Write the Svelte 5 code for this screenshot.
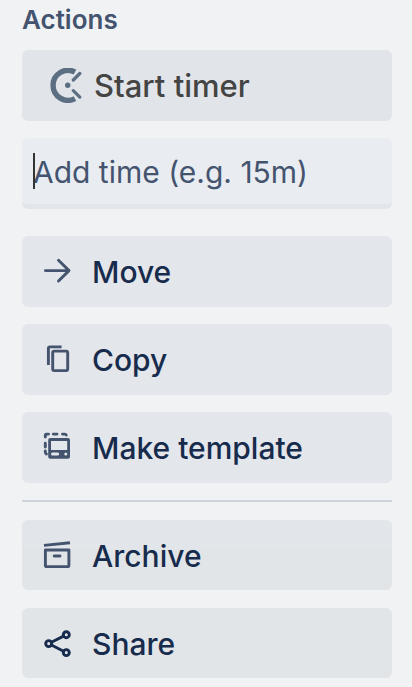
<script>
  const cardActions = [
    { id: 'move', label: 'Move' },
    { id: 'copy', label: 'Copy' },
    { id: 'template', label: 'Make template' },
  ];
  const moreActions = [
    { id: 'archive', label: 'Archive' },
    { id: 'share', label: 'Share' },
  ];
  let time = $state('');
</script>

{#snippet icon(id)}
  <svg class="icon {id}" viewBox="0 0 30 31" aria-hidden="true">
    {#if id === 'move'}
      <path d="M3.4 14.6H27M16.5 4.2L27 14.6L16.5 25" />
    {:else if id === 'copy'}
      <path class="butt" d="M6.4 21V4.4Q6.4 2.9 7.9 2.9H19.6" />
      <rect x="10.7" y="7.1" width="15" height="19.5" rx="1.5" />
    {:else if id === 'template'}
      <path d="M3.3 5V3.4Q3.3 2.1 4.6 2.1H6.5M11.3 2.1H15M20.5 2.1H22.6Q24 2.1 24.2 3M3.3 11.3V15M3.3 19V20.3Q3.3 21.7 4.4 22" />
      <path class="solid" fill-rule="evenodd" d="M8.2 6H26Q28 6 28 8V24.7Q28 26.7 26 26.7H8.2Q6.2 26.7 6.2 24.7V8Q6.2 6 8.2 6ZM9 9V18H25.2V9ZM10.5 20.5A1.5 1.5 0 0 0 10.5 23.5H15.7A1.5 1.5 0 0 0 15.7 20.5ZM23.8 20.5A1.5 1.5 0 0 0 23.8 23.5A1.5 1.5 0 0 0 23.8 20.5Z" />
    {:else if id === 'archive'}
      <path class="butt" d="M2 5.4L28 2.8" />
      <path d="M3.4 10H26.9V25.2Q26.9 26.6 25.5 26.6H4.8Q3.4 26.6 3.4 25.2ZM12.2 16H18" />
    {:else}
      <circle cx="6.7" cy="15.6" r="3" />
      <circle cx="24.3" cy="6.7" r="3" />
      <circle cx="24.3" cy="24.6" r="3" />
      <path d="M9.4 14.2L21.6 8.1M9.4 17L21.6 23.2" />
    {/if}
  </svg>
{/snippet}

<section class="panel" aria-labelledby="actions-title">
  <h2 id="actions-title">Actions</h2>

  <button class="action timer" type="button">
    <svg class="clock" viewBox="0 0 32 35" aria-hidden="true">
      <path class="ring" d="M25 4A15 15 0 1 0 25 30.6" />
      <path class="hands" d="M23.3 12L29.8 5.5M23.3 22.6L29.8 29.1" />
      <circle cx="17.7" cy="17.3" r="2.7" />
    </svg>
    Start timer
  </button>

  <div class="field">
    <input type="text" aria-label="Add time" placeholder="Add time (e.g. 15m)" bind:value={time} />
    {#if !time}<span class="caret"></span>{/if}
  </div>

  <div class="group">
    {#each cardActions as action}
      <button class="action" type="button">{@render icon(action.id)}{action.label}</button>
    {/each}
  </div>

  <hr />

  <div class="group more">
    {#each moreActions as action}
      <button class="action" type="button">{@render icon(action.id)}{action.label}</button>
    {/each}
  </div>
</section>

<style>
  :global(body) {
    margin: 0;
    background: #f1f2f4;
  }
  .panel {
    padding: 4px 20px 9px 22px;
    font-family: Inter, 'Liberation Sans', sans-serif;
    color: #172b4d;
  }
  h2 {
    margin: 0 0 14px;
    font-size: 26px;
    line-height: 32px;
    font-weight: 600;
    color: #44546f;
  }
  .action {
    display: flex;
    align-items: center;
    gap: 20px;
    box-sizing: border-box;
    width: 100%;
    height: 71px;
    padding: 0 20px;
    border: 0;
    border-radius: 6px;
    background: #e3e6ea;
    color: inherit;
    font: 500 30px/40px Inter, 'Liberation Sans', sans-serif;
    text-align: left;
    white-space: nowrap;
    cursor: pointer;
  }
  .timer {
    gap: 12px;
    padding: 0 28px;
    background: #e1e4e8;
    color: #444;
    font-size: 31px;
  }
  .clock {
    flex: none;
    width: 32px;
    height: 35px;
    fill: #5c6f82;
  }
  .clock path {
    fill: none;
    stroke: #5c6f82;
  }
  .clock .ring {
    stroke-width: 5.4;
  }
  .clock .hands {
    stroke-width: 3.2;
    stroke-linecap: round;
  }
  .field {
    position: relative;
    margin: 17px 0 27px;
  }
  input {
    display: block;
    box-sizing: border-box;
    width: 100%;
    height: 71px;
    padding: 2px 11px 0;
    border: 0;
    border-bottom: 5px solid #e2e6ea;
    border-radius: 6px;
    outline: 0;
    background: #e9ecf1;
    color: #44546f;
    font: 400 30px/40px Inter, 'Liberation Sans', sans-serif;
    caret-color: #333;
  }
  input::placeholder {
    color: #44546f;
    opacity: 1;
  }
  .caret {
    position: absolute;
    left: 11px;
    top: 15px;
    width: 2px;
    height: 36px;
    background: #333;
    pointer-events: none;
  }
  .group {
    display: flex;
    flex-direction: column;
    gap: 17px;
  }
  .more {
    gap: 18px;
  }
  .more .action {
    height: 70px;
    padding-top: 1px;
    background: #e1e5e8;
  }
  .more .action:first-child {
    background: linear-gradient(#e2e5ea 29px, #e1e5e8 29px);
  }
  hr {
    height: 2px;
    margin: 17px 0 18px;
    border: 0;
    background: #cdd4db;
  }
  .icon {
    flex: none;
    width: 30px;
    height: 31px;
    fill: none;
    stroke: #44546f;
    stroke-width: 2.9;
    stroke-linecap: round;
    stroke-linejoin: round;
  }
  .icon .solid {
    fill: #44546f;
    stroke: none;
  }
  .icon .butt {
    stroke-linecap: butt;
  }
  .share {
    stroke: #172b4d;
  }
</style>
